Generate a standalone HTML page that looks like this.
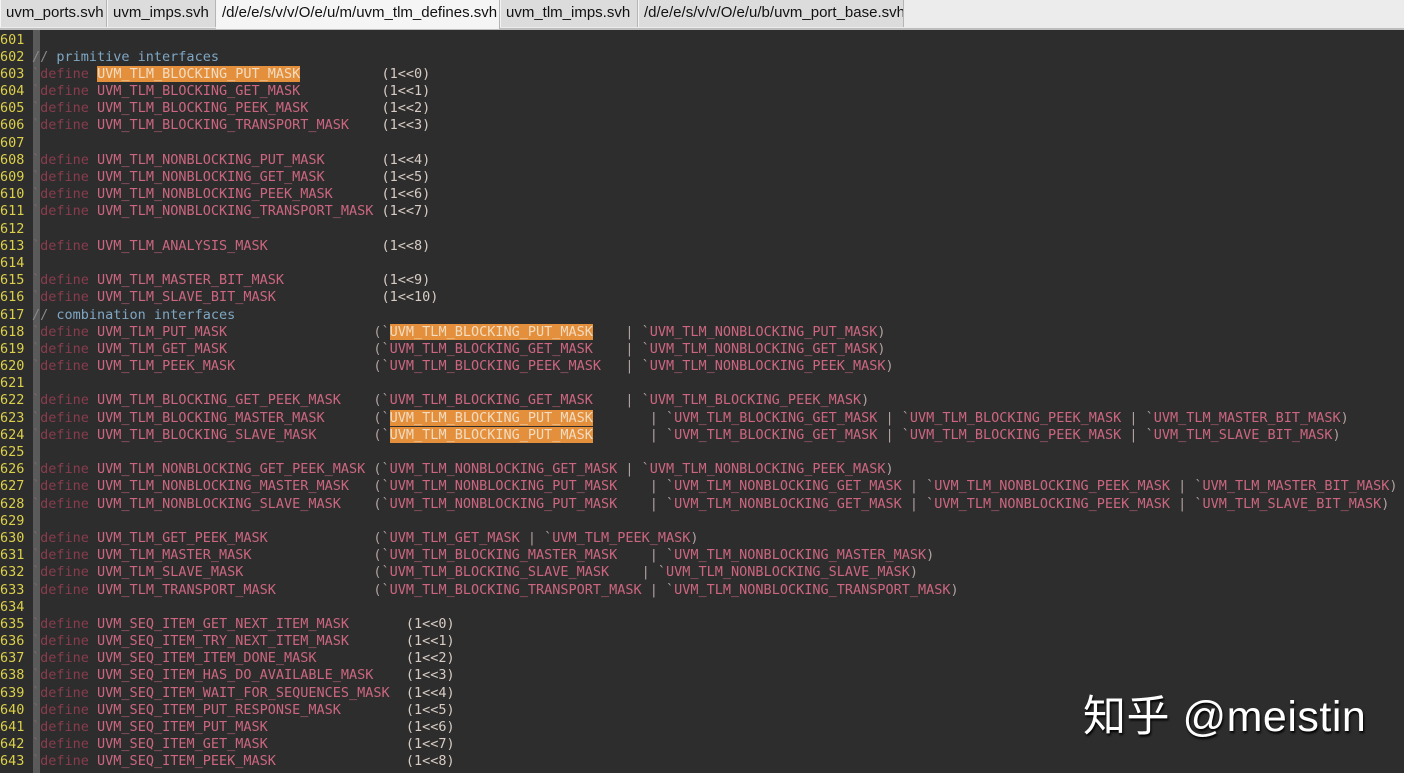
<!DOCTYPE html>
<html><head><meta charset="utf-8"><style>
html,body{margin:0;padding:0;width:1404px;height:773px;overflow:hidden;background:#2d2d2d}
#tabs{position:absolute;left:0;top:0;width:1404px;height:28px;background:#ececec;border-bottom:2px solid #bdbdbd;font:15px "Liberation Sans",sans-serif;color:#111}
.t{position:absolute;top:0;height:27px;line-height:26px;background:#dcdcdc;border-right:1px solid #b5b5b5;border-left:1px solid #f4f4f4;padding:0 5px;box-sizing:border-box;white-space:nowrap;overflow:hidden}
.t.a{background:#f5f5f5;top:0;height:29px}
#gut{position:absolute;left:33px;top:30px;width:7px;height:743px;background:#5a5a5a}
#nums,#code{position:absolute;top:31.5px;margin:0;font:13.5px/17.19px "DejaVu Sans Mono","Liberation Mono",monospace;white-space:pre}
#nums{left:0;color:#dcd04a}
#code{left:32px;color:#cc6680}
.d{color:#8a3c4e}.k{color:#7a6a6a}.n{color:#d8ccc4}.c{color:#7fa7c4}.cs{color:#8a8a8a}
.h{background:#e38f3c;color:#f3dcc0}
.p{color:#b0a0a0}
#wm{position:absolute;left:1083px;top:682px;font:43px "Liberation Sans","Noto Sans CJK SC",sans-serif;color:#fff;text-shadow:1px 2px 2px #000;letter-spacing:0.5px}
</style></head><body>
<div id="tabs">
<div class="t" style="left:0;width:107px">uvm_ports.svh</div>
<div class="t" style="left:107px;width:109px">uvm_imps.svh</div>
<div class="t a" style="left:216px;width:284px">/d/e/e/s/v/v/O/e/u/m/uvm_tlm_defines.svh</div>
<div class="t" style="left:500px;width:138px">uvm_tlm_imps.svh</div>
<div class="t" style="left:638px;width:266px">/d/e/e/s/v/v/O/e/u/b/uvm_port_base.svh</div>
</div>
<div id="gut"></div>
<pre id="nums">601
602
603
604
605
606
607
608
609
610
611
612
613
614
615
616
617
618
619
620
621
622
623
624
625
626
627
628
629
630
631
632
633
634
635
636
637
638
639
640
641
642
643</pre>
<pre id="code">

<span class="cs">//</span><span class="c"> primitive interfaces</span>
<span class="k">`</span><span class="d">define</span> <span class="h">UVM_TLM_BLOCKING_PUT_MASK</span>          <span class="n">(1&lt;&lt;0)</span>
<span class="k">`</span><span class="d">define</span> UVM_TLM_BLOCKING_GET_MASK          <span class="n">(1&lt;&lt;1)</span>
<span class="k">`</span><span class="d">define</span> UVM_TLM_BLOCKING_PEEK_MASK         <span class="n">(1&lt;&lt;2)</span>
<span class="k">`</span><span class="d">define</span> UVM_TLM_BLOCKING_TRANSPORT_MASK    <span class="n">(1&lt;&lt;3)</span>

<span class="k">`</span><span class="d">define</span> UVM_TLM_NONBLOCKING_PUT_MASK       <span class="n">(1&lt;&lt;4)</span>
<span class="k">`</span><span class="d">define</span> UVM_TLM_NONBLOCKING_GET_MASK       <span class="n">(1&lt;&lt;5)</span>
<span class="k">`</span><span class="d">define</span> UVM_TLM_NONBLOCKING_PEEK_MASK      <span class="n">(1&lt;&lt;6)</span>
<span class="k">`</span><span class="d">define</span> UVM_TLM_NONBLOCKING_TRANSPORT_MASK <span class="n">(1&lt;&lt;7)</span>

<span class="k">`</span><span class="d">define</span> UVM_TLM_ANALYSIS_MASK              <span class="n">(1&lt;&lt;8)</span>

<span class="k">`</span><span class="d">define</span> UVM_TLM_MASTER_BIT_MASK            <span class="n">(1&lt;&lt;9)</span>
<span class="k">`</span><span class="d">define</span> UVM_TLM_SLAVE_BIT_MASK             <span class="n">(1&lt;&lt;10)</span>
<span class="cs">//</span><span class="c"> combination interfaces</span>
<span class="k">`</span><span class="d">define</span> UVM_TLM_PUT_MASK                  <span class="p">(`</span><span class="h">UVM_TLM_BLOCKING_PUT_MASK</span>    <span class="p">| `</span>UVM_TLM_NONBLOCKING_PUT_MASK<span class="p">)</span>
<span class="k">`</span><span class="d">define</span> UVM_TLM_GET_MASK                  <span class="p">(`</span>UVM_TLM_BLOCKING_GET_MASK    <span class="p">| `</span>UVM_TLM_NONBLOCKING_GET_MASK<span class="p">)</span>
<span class="k">`</span><span class="d">define</span> UVM_TLM_PEEK_MASK                 <span class="p">(`</span>UVM_TLM_BLOCKING_PEEK_MASK   <span class="p">| `</span>UVM_TLM_NONBLOCKING_PEEK_MASK<span class="p">)</span>

<span class="k">`</span><span class="d">define</span> UVM_TLM_BLOCKING_GET_PEEK_MASK    <span class="p">(`</span>UVM_TLM_BLOCKING_GET_MASK    <span class="p">| `</span>UVM_TLM_BLOCKING_PEEK_MASK<span class="p">)</span>
<span class="k">`</span><span class="d">define</span> UVM_TLM_BLOCKING_MASTER_MASK      <span class="p">(`</span><span class="h">UVM_TLM_BLOCKING_PUT_MASK</span>       <span class="p">| `</span>UVM_TLM_BLOCKING_GET_MASK <span class="p">| `</span>UVM_TLM_BLOCKING_PEEK_MASK <span class="p">| `</span>UVM_TLM_MASTER_BIT_MASK<span class="p">)</span>
<span class="k">`</span><span class="d">define</span> UVM_TLM_BLOCKING_SLAVE_MASK       <span class="p">(`</span><span class="h">UVM_TLM_BLOCKING_PUT_MASK</span>       <span class="p">| `</span>UVM_TLM_BLOCKING_GET_MASK <span class="p">| `</span>UVM_TLM_BLOCKING_PEEK_MASK <span class="p">| `</span>UVM_TLM_SLAVE_BIT_MASK<span class="p">)</span>

<span class="k">`</span><span class="d">define</span> UVM_TLM_NONBLOCKING_GET_PEEK_MASK <span class="p">(`</span>UVM_TLM_NONBLOCKING_GET_MASK <span class="p">| `</span>UVM_TLM_NONBLOCKING_PEEK_MASK<span class="p">)</span>
<span class="k">`</span><span class="d">define</span> UVM_TLM_NONBLOCKING_MASTER_MASK   <span class="p">(`</span>UVM_TLM_NONBLOCKING_PUT_MASK    <span class="p">| `</span>UVM_TLM_NONBLOCKING_GET_MASK <span class="p">| `</span>UVM_TLM_NONBLOCKING_PEEK_MASK <span class="p">| `</span>UVM_TLM_MASTER_BIT_MASK<span class="p">)</span>
<span class="k">`</span><span class="d">define</span> UVM_TLM_NONBLOCKING_SLAVE_MASK    <span class="p">(`</span>UVM_TLM_NONBLOCKING_PUT_MASK    <span class="p">| `</span>UVM_TLM_NONBLOCKING_GET_MASK <span class="p">| `</span>UVM_TLM_NONBLOCKING_PEEK_MASK <span class="p">| `</span>UVM_TLM_SLAVE_BIT_MASK<span class="p">)</span>

<span class="k">`</span><span class="d">define</span> UVM_TLM_GET_PEEK_MASK             <span class="p">(`</span>UVM_TLM_GET_MASK <span class="p">| `</span>UVM_TLM_PEEK_MASK<span class="p">)</span>
<span class="k">`</span><span class="d">define</span> UVM_TLM_MASTER_MASK               <span class="p">(`</span>UVM_TLM_BLOCKING_MASTER_MASK    <span class="p">| `</span>UVM_TLM_NONBLOCKING_MASTER_MASK<span class="p">)</span>
<span class="k">`</span><span class="d">define</span> UVM_TLM_SLAVE_MASK                <span class="p">(`</span>UVM_TLM_BLOCKING_SLAVE_MASK    <span class="p">| `</span>UVM_TLM_NONBLOCKING_SLAVE_MASK<span class="p">)</span>
<span class="k">`</span><span class="d">define</span> UVM_TLM_TRANSPORT_MASK            <span class="p">(`</span>UVM_TLM_BLOCKING_TRANSPORT_MASK <span class="p">| `</span>UVM_TLM_NONBLOCKING_TRANSPORT_MASK<span class="p">)</span>

<span class="k">`</span><span class="d">define</span> UVM_SEQ_ITEM_GET_NEXT_ITEM_MASK       <span class="n">(1&lt;&lt;0)</span>
<span class="k">`</span><span class="d">define</span> UVM_SEQ_ITEM_TRY_NEXT_ITEM_MASK       <span class="n">(1&lt;&lt;1)</span>
<span class="k">`</span><span class="d">define</span> UVM_SEQ_ITEM_ITEM_DONE_MASK           <span class="n">(1&lt;&lt;2)</span>
<span class="k">`</span><span class="d">define</span> UVM_SEQ_ITEM_HAS_DO_AVAILABLE_MASK    <span class="n">(1&lt;&lt;3)</span>
<span class="k">`</span><span class="d">define</span> UVM_SEQ_ITEM_WAIT_FOR_SEQUENCES_MASK  <span class="n">(1&lt;&lt;4)</span>
<span class="k">`</span><span class="d">define</span> UVM_SEQ_ITEM_PUT_RESPONSE_MASK        <span class="n">(1&lt;&lt;5)</span>
<span class="k">`</span><span class="d">define</span> UVM_SEQ_ITEM_PUT_MASK                 <span class="n">(1&lt;&lt;6)</span>
<span class="k">`</span><span class="d">define</span> UVM_SEQ_ITEM_GET_MASK                 <span class="n">(1&lt;&lt;7)</span>
<span class="k">`</span><span class="d">define</span> UVM_SEQ_ITEM_PEEK_MASK                <span class="n">(1&lt;&lt;8)</span></pre>
<div id="wm">知乎 @meistin</div>
</body></html>
